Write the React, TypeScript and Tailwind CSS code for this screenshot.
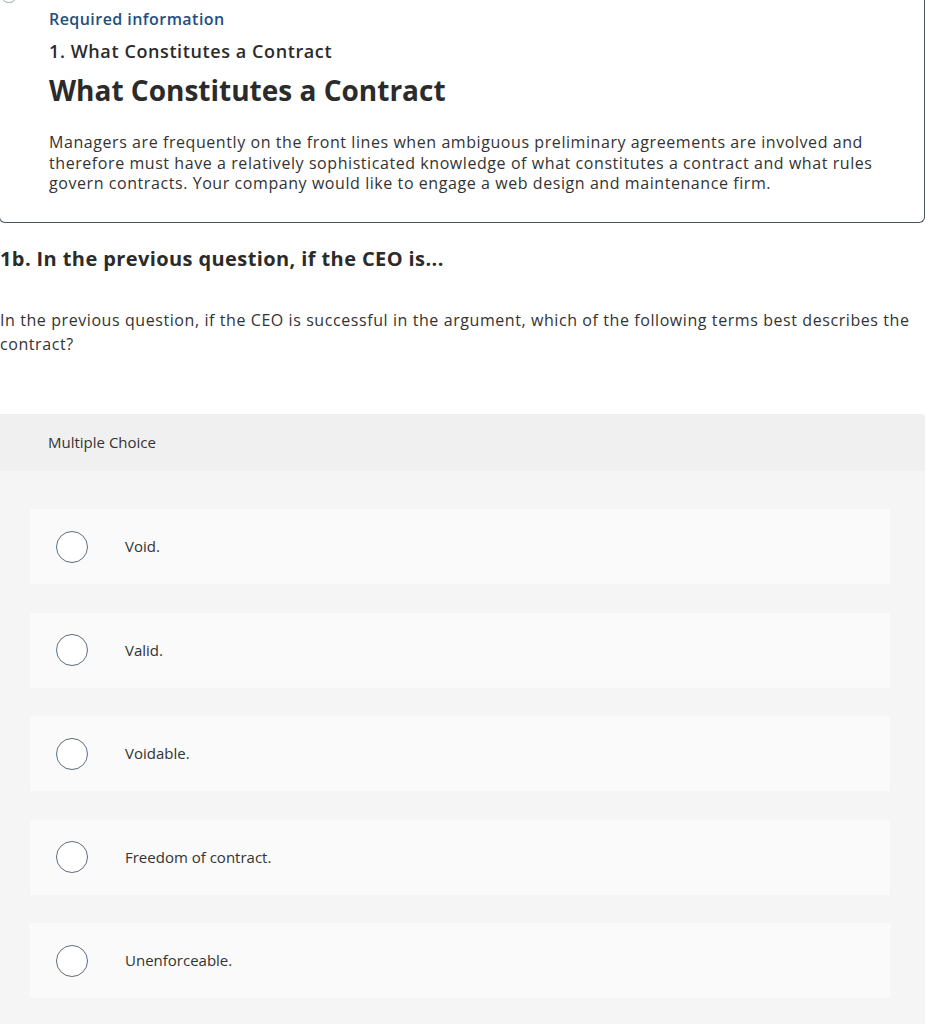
import React from "react";

const options = ["Void.", "Valid.", "Voidable.", "Freedom of contract.", "Unenforceable."];

export default function App() {
  return (
    <div
      className="w-[942px] min-h-[1024px] bg-white text-[#333] overflow-hidden"
      style={{ fontFamily: "'Open Sans', Lato, sans-serif" }}
    >
      <div className="relative ml-[-1px] w-[926px] h-[223px] border-l border-r border-b border-[#4a5561] rounded-b-[6px] pl-[49px] pt-[8px]">
        <div className="absolute left-[1px] top-[-12px] w-[16px] h-[15px] rounded-full border border-[#9aa]" />
        <div className="text-[16px] font-semibold text-[#1f4e82] leading-[22px] tracking-[0.45px]">Required information</div>
        <div className="mt-[10px] text-[18px] font-semibold text-[#2b2b2b] leading-[22px] tracking-[0.6px]">1. What Constitutes a Contract</div>
        <div className="mt-[10px] text-[28px] font-bold text-[#2b2b2b] leading-[36px]">What Constitutes a Contract</div>
        <p className="mt-[24px] text-[16px] leading-[20.5px] text-[#333] whitespace-nowrap tracking-[0.57px]">
          Managers are frequently on the front lines when ambiguous preliminary agreements are involved and
          <br />
          therefore must have a relatively sophisticated knowledge of what constitutes a contract and what rules
          <br />
          govern contracts. Your company would like to engage a web design and maintenance firm.
        </p>
      </div>

      <h2 className="mt-[23px] text-[20px] font-bold text-[#2b2b2b] leading-[26px] tracking-[0.4px]">
        1b. In the previous question, if the CEO is...
      </h2>
      <p className="mt-[37px] text-[16px] leading-[23.5px] text-[#333] whitespace-nowrap tracking-[0.58px]">
        In the previous question, if the CEO is successful in the argument, which of the following terms best describes the
        <br />
        contract?
      </p>

      <div className="mt-[58px] w-[925px] rounded-tr-[4px] overflow-hidden">
        <div className="h-[57px] bg-[#f0f0f0] pl-[48px] flex items-center text-[15px] text-[#333]">
          Multiple Choice
        </div>
        <div className="bg-[#f5f5f5] pl-[30px] pr-[35px] pt-[38px] pb-[40px] flex flex-col gap-[28.5px]">
          {options.map((o) => (
            <div key={o} className="h-[75px] bg-[#fafafa] flex items-center pl-[26px]">
              <div className="w-[32px] h-[32px] rounded-full border-[1.5px] border-[#5f6d7a] bg-white" />
              <span className="ml-[37px] text-[15px] text-[#333]">{o}</span>
            </div>
          ))}
        </div>
      </div>
    </div>
  );
}
